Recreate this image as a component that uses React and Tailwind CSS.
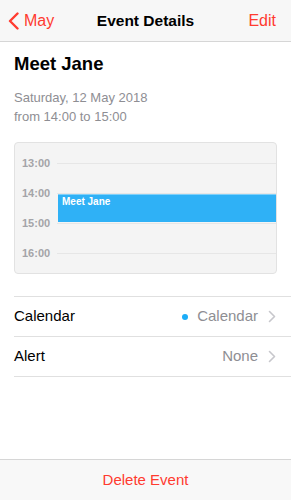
import React from "react";

const hours = ["13:00", "14:00", "15:00", "16:00"];

const Chevron = () => (
  <svg width="8" height="13" viewBox="0 0 8 13" fill="none" className="ml-[10px]">
    <path d="M1.5 1.5l5 5-5 5" stroke="#c7c7cc" strokeWidth="1.6" strokeLinecap="round" strokeLinejoin="round" />
  </svg>
);

export default function App() {
  return (
    <div
      className="flex flex-col h-[500px] w-[291px] bg-white text-black"
      style={{ fontFamily: '"Liberation Sans", Arial, sans-serif' }}
    >
      {/* Nav bar */}
      <div className="relative flex items-center justify-between h-[42px] bg-[#f7f7f7] border-b border-[#d6d6d6] px-[8px]">
        <div className="flex items-center text-[#ff3b30] text-[16px]">
          <svg width="11" height="18" viewBox="0 0 11 18" fill="none">
            <path d="M9.5 1.5L2 9l7.5 7.5" stroke="#ff3b30" strokeWidth="2.4" strokeLinecap="round" strokeLinejoin="round" />
          </svg>
          <span className="ml-[5px]">May</span>
        </div>
        <div className="absolute left-0 right-0 text-center text-[15.5px] font-bold pointer-events-none">
          Event Details
        </div>
        <span className="text-[#ff3b30] text-[16px] mr-[7px]">Edit</span>
      </div>

      {/* Title */}
      <div className="px-[14px] pt-[9px]">
        <h1 className="text-[18.5px] font-bold leading-[26px]">Meet Jane</h1>
        <div className="mt-[11px] text-[13px] leading-[19px] text-[#8e8e93]">
          <div>Saturday, 12 May 2018</div>
          <div>from 14:00 to 15:00</div>
        </div>
      </div>

      {/* Day view */}
      <div className="relative mx-[14px] mt-[16px] h-[132px] rounded-[4px] border border-[#e2e2e2] bg-[#f4f4f4] pt-[5px]">
        {hours.map((h) => (
          <div key={h} className="flex items-center h-[30px]">
            <span className="w-[42px] pl-[7px] text-[11px] font-bold text-[#a4a4a8]">{h}</span>
            <div className="flex-1 h-px bg-[#e6e6e6]" />
          </div>
        ))}
        <div className="absolute left-[43px] right-0 top-[51px] h-[28px] bg-[#2fb1f6] border-t border-[#7fd0fa] px-[4px] pt-[1px] text-[10px] leading-[12px] font-bold text-white">
          Meet Jane
        </div>
      </div>

      {/* Rows */}
      <div className="mt-[22px] ml-[14px] border-t border-[#e0e0e0]">
        <div className="flex items-center justify-between h-[40px] border-b border-[#e0e0e0] pr-[15px]">
          <span className="text-[15px]">Calendar</span>
          <div className="flex items-center text-[15px] text-[#8e8e93]">
            <span className="w-[6px] h-[6px] rounded-full bg-[#1badf8] mr-[9px]" />
            <span>Calendar</span>
            <Chevron />
          </div>
        </div>
        <div className="flex items-center justify-between h-[40px] border-b border-[#e0e0e0] pr-[15px]">
          <span className="text-[15px]">Alert</span>
          <div className="flex items-center text-[15px] text-[#8e8e93]">
            <span>None</span>
            <Chevron />
          </div>
        </div>
      </div>

      <div className="flex-1" />

      {/* Bottom bar */}
      <div className="flex items-center justify-center h-[41px] border-t border-[#d6d6d6] bg-[#f8f8f8]">
        <span className="text-[15px] text-[#ff3b30]">Delete Event</span>
      </div>
    </div>
  );
}
